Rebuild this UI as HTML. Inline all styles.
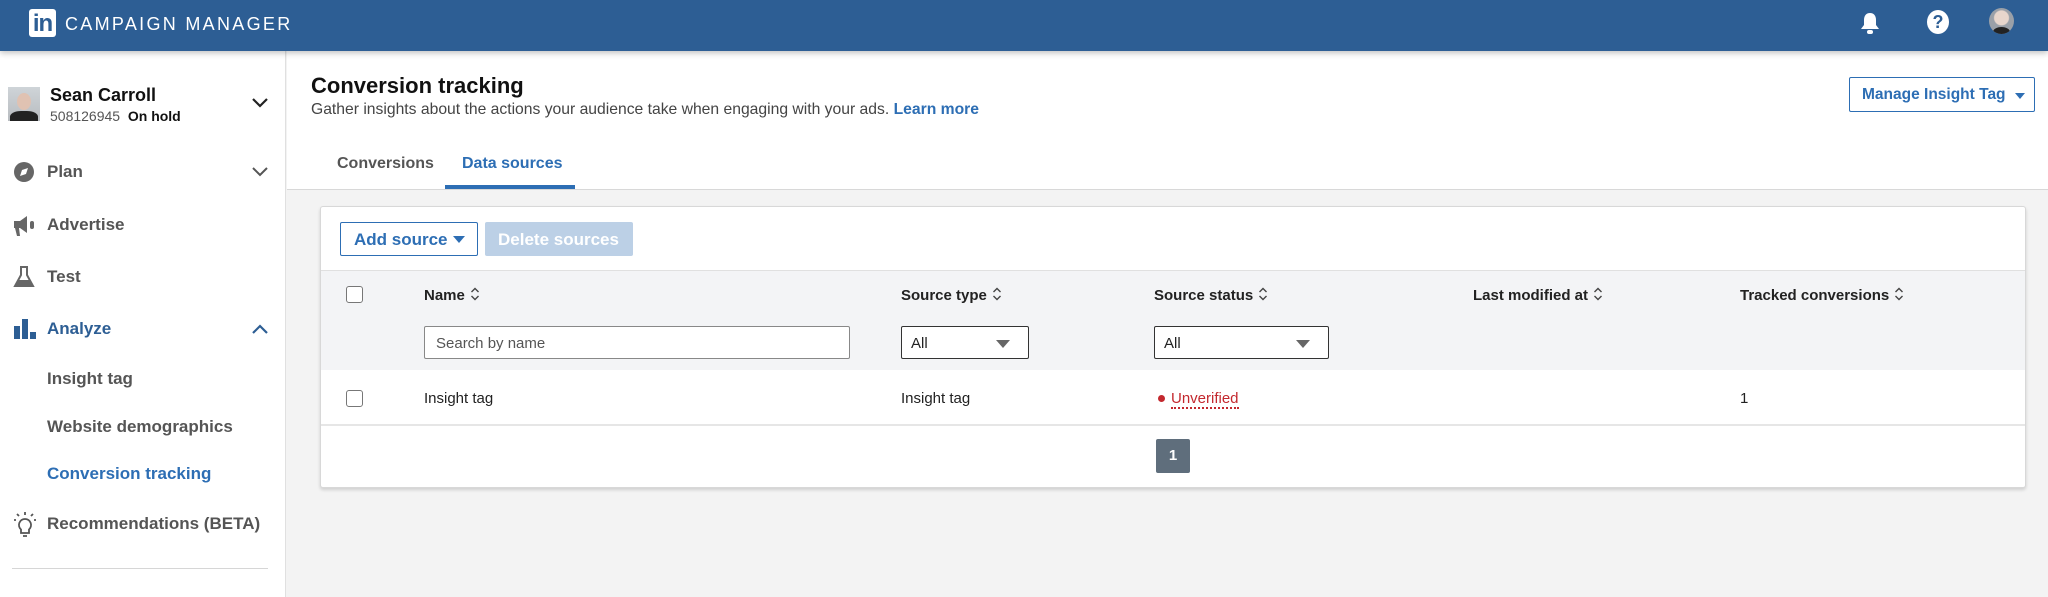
<!DOCTYPE html>
<html><head><meta charset="utf-8"><style>
*{box-sizing:border-box;margin:0;padding:0}
body{width:2048px;height:597px;overflow:hidden;font-family:"Liberation Sans",Arial,sans-serif;background:#f3f3f3;position:relative;color:#222}
.abs{position:absolute}
.hdr{left:0;top:0;width:2048px;height:51px;background:#2d5e94;box-shadow:0 2px 6px rgba(0,0,0,.25);z-index:5}
.side{left:0;top:51px;width:286px;height:546px;background:#fff;border-right:1px solid #e0e0e0}
.top{left:287px;top:51px;width:1761px;height:139px;background:#fff;border-bottom:1px solid #d8d8d8}
.nav{position:absolute;left:47px;font-size:17px;color:#555;font-weight:bold;white-space:nowrap}
.ico{position:absolute;left:13px}
.th{position:absolute;top:286px;font-size:15px;font-weight:bold;color:#222;white-space:nowrap}
.sort{display:inline-block;margin-left:5px;vertical-align:-2px}
.cb{position:absolute;width:17px;height:17px;border:1.5px solid #777;border-radius:3px;background:#fff}
.sel{position:absolute;top:326px;height:33px;border:1.5px solid #333;border-radius:2px;background:#fff;font-size:15px;padding:8px 9px}
.sel:after{content:"";position:absolute;right:18px;top:13px;border:7px solid transparent;border-top:8px solid #666;border-bottom:0}
</style></head><body>
<div class="abs hdr">
  <div class="abs" style="left:29px;top:9px;width:27px;height:28px;background:#fff;border-radius:3px;color:#2d5e94;font-weight:bold;font-size:24px;line-height:30px;text-align:center;letter-spacing:-1px">in</div>
  <div class="abs" style="left:65px;top:14px;color:#fff;font-size:18px;letter-spacing:2.3px">CAMPAIGN MANAGER</div>
  <svg class="abs" style="left:1859px;top:11px" width="22" height="24" viewBox="0 0 22 24"><path d="M11 2c-4 0-6 3-6 7v5l-3 4h18l-3-4V9c0-4-2-7-6-7z" fill="#fff"/><rect x="8" y="19" width="6" height="4" rx="2" fill="#fff"/></svg>
  <div class="abs" style="left:1927px;top:10px;width:22px;height:24px;border-radius:50%;background:#fff;color:#2d5e94;font-weight:bold;font-size:18px;text-align:center;line-height:24px">?</div>
  <div class="abs" style="left:1989px;top:8px;width:25px;height:26px;border-radius:50%;background:radial-gradient(circle at 50% 38%,#e8d6cc 0 7px,#9aa0a8 8px);overflow:hidden"><div style="position:absolute;left:4px;top:19px;width:17px;height:10px;border-radius:50%;background:#222"></div></div>
</div>
<div class="abs side"></div>
<div class="abs top"></div>
<!-- sidebar -->
<div class="abs" style="left:8px;top:87px;width:32px;height:34px;background:linear-gradient(#cfd4d8,#b8bcc0);overflow:hidden"><div style="position:absolute;left:9px;top:6px;width:14px;height:17px;border-radius:50%;background:#e0c2b2"></div><div style="position:absolute;left:2px;top:24px;width:28px;height:14px;border-radius:40% 40% 0 0;background:#222"></div></div>
<div class="abs" style="left:50px;top:85px;font-size:18px;font-weight:bold;color:#111">Sean Carroll</div>
<div class="abs" style="left:50px;top:108px;font-size:14px;color:#555">508126945 &nbsp;<b style="color:#111">On hold</b></div>
<svg class="abs" style="left:251px;top:97px" width="18" height="12"><path d="M2 2l7 7 7-7" stroke="#222" stroke-width="2.2" fill="none"/></svg>
<svg class="ico" style="top:161px" width="22" height="22"><circle cx="11" cy="11" r="10" fill="#666"/><path d="M15 7l-2 6-6 2 2-6z" fill="#fff"/></svg>
<div class="nav" style="top:162px">Plan</div>
<svg class="abs" style="left:251px;top:166px" width="18" height="12"><path d="M2 2l7 7 7-7" stroke="#555" stroke-width="2" fill="none"/></svg>
<svg class="ico" style="top:214px" width="24" height="24"><path d="M1 7h6l7-5v17l-7-5H6l1 8H4l-2-8H1z" fill="#666"/><rect x="17" y="7" width="4" height="8" rx="2" fill="#666"/></svg>
<div class="nav" style="top:215px">Advertise</div>
<svg class="ico" style="top:265px" width="22" height="24"><path d="M7 2h8M8 2v8L2 21h18L14 10V2" stroke="#666" stroke-width="2" fill="none"/><path d="M5 15h12l3 6H2z" fill="#666"/></svg>
<div class="nav" style="top:267px">Test</div>
<svg class="ico" style="top:318px" width="24" height="22"><rect x="1" y="8" width="6" height="13" fill="#2d5e94"/><rect x="9" y="1" width="6" height="20" fill="#2d5e94"/><rect x="17" y="14" width="6" height="7" fill="#2d5e94"/></svg>
<div class="nav" style="top:319px;color:#2d5e94">Analyze</div>
<svg class="abs" style="left:251px;top:323px" width="18" height="12"><path d="M2 10l7-7 7 7" stroke="#2d5e94" stroke-width="2.2" fill="none"/></svg>
<div class="nav" style="top:369px">Insight tag</div>
<div class="nav" style="top:417px">Website demographics</div>
<div class="nav" style="top:464px;color:#2d6eb4">Conversion tracking</div>
<svg class="ico" style="top:511px" width="24" height="26"><path d="M12 8a6 6 0 0 0-4 10.5V22h8v-3.5A6 6 0 0 0 12 8z" stroke="#555" stroke-width="1.8" fill="none"/><path d="M10 25h4M12 1v3M4 3l2 2M20 3l-2 2M1 9h2M21 9h2" stroke="#555" stroke-width="1.8"/></svg>
<div class="nav" style="top:514px">Recommendations (BETA)</div>
<div class="abs" style="left:12px;top:568px;width:256px;height:1px;background:#d6d6d6"></div>
<!-- top area -->
<div class="abs" style="left:311px;top:73px;font-size:22px;font-weight:bold;color:#111">Conversion tracking</div>
<div class="abs" style="left:311px;top:101px;font-size:15.7px;color:#444">Gather insights about the actions your audience take when engaging with your ads. <b style="color:#2d6eb4">Learn more</b></div>
<div class="abs" style="left:1849px;top:77px;width:186px;height:35px;border:1.5px solid #2d6eb4;border-radius:2px;background:#fff;color:#2d6eb4;font-size:15.5px;font-weight:bold;padding:8px 12px">Manage Insight Tag</div>
<div class="abs" style="left:2015px;top:93px;border:5px solid transparent;border-top:6px solid #2d6eb4"></div>
<div class="abs" style="left:337px;top:155px;font-size:16px;color:#555;font-weight:bold">Conversions</div>
<div class="abs" style="left:462px;top:155px;font-size:16px;color:#2d6eb4;font-weight:bold">Data sources</div>
<div class="abs" style="left:445px;top:185px;width:130px;height:4px;background:#2d6eb4"></div>
<!-- card -->
<div class="abs" style="left:320px;top:206px;width:1706px;height:282px;background:#fff;border:1px solid #d8d8d8;border-radius:3px;box-shadow:0 2px 3px rgba(0,0,0,.15)"></div>
<div class="abs" style="left:340px;top:222px;width:138px;height:34px;border:1.5px solid #2d6eb4;border-radius:2px;color:#2d6eb4;font-size:17px;font-weight:bold;padding:7px 13px;background:#fff">Add source</div>
<div class="abs" style="left:453px;top:236px;border:6px solid transparent;border-top:7px solid #2d6eb4"></div>
<div class="abs" style="left:485px;top:222px;width:148px;height:34px;background:#bcd0e6;border-radius:2px;color:#fff;font-size:17px;font-weight:bold;padding:8px 13px">Delete sources</div>
<div class="abs" style="left:321px;top:270px;width:1704px;height:100px;background:#f3f4f6;border-top:1px solid #e0e0e0"></div>
<div class="cb" style="left:346px;top:286px"></div>
<div class="th" style="left:424px">Name<svg class="sort" width="10" height="16"><path d="M1.5 6L5 2.5 8.5 6M1.5 10L5 13.5 8.5 10" stroke="#444" stroke-width="1.4" fill="none"/></svg></div>
<div class="th" style="left:901px">Source type<svg class="sort" width="10" height="16"><path d="M1.5 6L5 2.5 8.5 6M1.5 10L5 13.5 8.5 10" stroke="#444" stroke-width="1.4" fill="none"/></svg></div>
<div class="th" style="left:1154px">Source status<svg class="sort" width="10" height="16"><path d="M1.5 6L5 2.5 8.5 6M1.5 10L5 13.5 8.5 10" stroke="#444" stroke-width="1.4" fill="none"/></svg></div>
<div class="th" style="left:1473px">Last modified at<svg class="sort" width="10" height="16"><path d="M1.5 6L5 2.5 8.5 6M1.5 10L5 13.5 8.5 10" stroke="#444" stroke-width="1.4" fill="none"/></svg></div>
<div class="th" style="left:1740px">Tracked conversions<svg class="sort" width="10" height="16"><path d="M1.5 6L5 2.5 8.5 6M1.5 10L5 13.5 8.5 10" stroke="#444" stroke-width="1.4" fill="none"/></svg></div>
<div class="abs" style="left:424px;top:326px;width:426px;height:33px;border:1px solid #888;border-radius:2px;background:#fff;font-size:15px;color:#555;padding:8px 11px">Search by name</div>
<div class="sel" style="left:901px;width:128px">All</div>
<div class="sel" style="left:1154px;width:175px">All</div>
<div class="cb" style="left:346px;top:390px"></div>
<div class="abs" style="left:424px;top:390px;font-size:15px;color:#222">Insight tag</div>
<div class="abs" style="left:901px;top:390px;font-size:15px;color:#222">Insight tag</div>
<div class="abs" style="left:1158px;top:395px;width:7px;height:7px;border-radius:50%;background:#c3282e"></div>
<div class="abs" style="left:1171px;top:390px;font-size:15px;color:#c3282e;border-bottom:2px dotted #c3282e;line-height:17px">Unverified</div>
<div class="abs" style="left:1740px;top:390px;font-size:15px;color:#222">1</div>
<div class="abs" style="left:321px;top:424px;width:1704px;height:2px;background:#e6e6e6"></div>
<div class="abs" style="left:1156px;top:439px;width:34px;height:34px;background:#5f6e7c;border-radius:2px;color:#fff;font-size:15px;font-weight:bold;text-align:center;line-height:34px">1</div>
</body></html>
